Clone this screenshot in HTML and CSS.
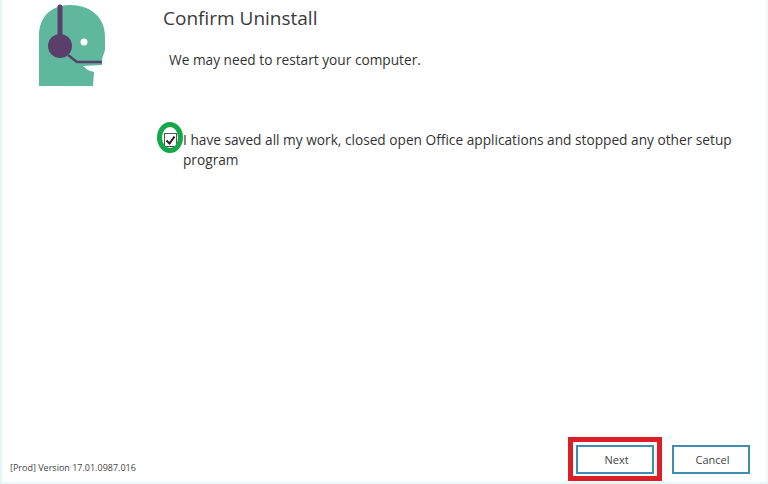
FILE: index.html
```html
<!DOCTYPE html>
<html lang="en">
<head>
    <meta charset="UTF-8">
    <meta name="viewport" content="width=device-width, initial-scale=1.0">
    <title>Confirm Uninstall</title>
    <link rel="stylesheet" href="styles.css">
</head>
<body>

<div class="window">
    <main class="content">
        <div class="logo-col">
            <svg class="logo" width="70" height="90" viewBox="0 0 70 90">
                <path fill="#5fb89d" d="M1 86V36C1 16 14 5 32 5C52 5 67 17 67 36V50L64 59V65L45 66C49 70 52 71 56 72L55 86Z"/>
                <circle cx="46" cy="42" r="3.5" fill="#fff"/>
                <path fill="none" stroke="#5b3f6b" stroke-width="5" stroke-linecap="round" d="M22 7V36"/>
                <circle cx="22" cy="46" r="12" fill="#5b3f6b"/>
                <path fill="none" stroke="#5b3f6b" stroke-width="2.5" d="M30 55L39 62H64"/>
            </svg>
        </div>
        <div class="body-col">
            <h1 class="title">Confirm Uninstall</h1>
            <p class="message">We may need to restart your computer.</p>
            <label class="confirm">
                <span class="checkbox">
                    <svg width="11" height="11" viewBox="0 0 11 11"><path fill="none" stroke="#222" stroke-width="2" d="M1.5 5.5L4.5 8.5L9.5 1.5"/></svg>
                    <span class="ring"></span>
                </span>
                <span class="confirm-text">I have saved all my work, closed open Office applications and stopped any other setup program</span>
            </label>
        </div>
    </main>
    <footer class="footer">
        <span class="version">[Prod] Version 17.01.0987.016</span>
        <div class="buttons">
            <span class="highlight"><button class="btn">Next</button></span>
            <button class="btn">Cancel</button>
        </div>
    </footer>
</div>

</body>
</html>
```
FILE: styles.css
```css
* {
    box-sizing: border-box;
}

html, body {
    margin: 0;
    padding: 0;
    height: 100%;
    overflow: hidden;
}

body {
    font-family: "Open Sans", "Noto Sans", sans-serif;
    background-color: #ffffff;
    color: #333333;
}

.window {
    height: 484px;
    display: flex;
    flex-direction: column;
    border-left: 2px solid #e4f6fa;
    border-right: 2px solid #eef9fb;
    border-bottom: 2px solid #e8f7fa;
}

.content {
    flex: 1;
    display: flex;
}

.logo-col {
    width: 161px;
    flex-shrink: 0;
    padding-left: 36px;
}

.logo {
    display: block;
}

.body-col {
    flex: 1;
    padding-top: 5px;
}

.title {
    margin: 0;
    font-size: 19px;
    font-weight: 400;
    line-height: 26px;
    color: #3a3a3a;
}

.message {
    margin: 19px 0 0 6px;
    font-size: 13.7px;
    line-height: 20px;
    color: #333333;
}

.confirm {
    display: flex;
    margin-top: 60px;
    font-size: 13.7px;
    line-height: 20px;
}

.checkbox {
    position: relative;
    width: 13px;
    height: 14px;
    flex-shrink: 0;
    margin: 3px 0 0 1px;
    border: 1px solid #555555;
    display: flex;
    align-items: center;
    justify-content: center;
}

.ring {
    position: absolute;
    left: -8px;
    top: -12px;
    width: 26px;
    height: 31px;
    border: 5px solid #14a84a;
    border-radius: 50%;
}

.confirm-text {
    margin-left: 6px;
    width: 570px;
}

.footer {
    display: flex;
    justify-content: space-between;
    align-items: flex-end;
    padding: 0 16px 1px 8px;
}

.version {
    font-size: 9px;
    line-height: 12px;
    color: #444444;
    margin-bottom: 7px;
}

.buttons {
    display: flex;
    align-items: center;
    gap: 10px;
}

.highlight {
    display: block;
    padding: 3px 3px 2px;
    border: 5px solid #dc1f26;
}

.btn {
    display: block;
    width: 78px;
    height: 29px;
    padding: 0 0 0 3px;
    background-color: #ffffff;
    border: 2px solid #3f8fb5;
    font-family: inherit;
    font-size: 11px;
    color: #444444;
}
```
